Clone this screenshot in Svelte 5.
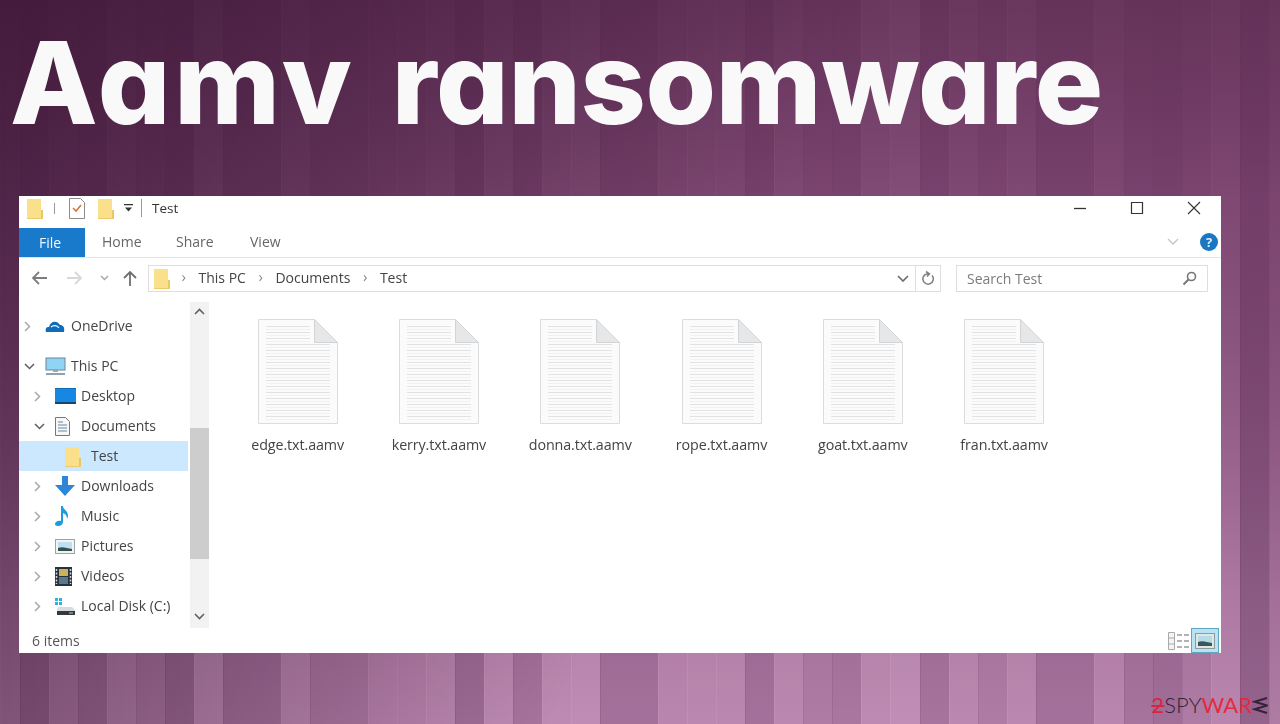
<script>
  // one entry per 29px band of the wallpaper: [width, tone], tone is % white (+) or black (-)
  const bands = [
    [20, 0], [29, -8], [29, 0], [29, -6], [29, 3], [29, -2], [29, -8], [29, 5], [58, -6], [29, 3], [58, -4],
    [29, 0], [29, 0], [29, 2], [29, -8], [29, 3], [29, -6], [29, 3], [29, 4], [58, -7], [29, 1], [29, 2],
    [29, 2], [29, -7], [29, 2], [29, -3], [29, -5], [29, 3], [30, 5], [29, -6], [29, 2], [29, -3], [29, 2],
    [58, -7], [30, 1], [29, -6], [29, -8], [29, -3], [29, 1], [29, -12], [28, -3]
  ];

  function bandImage() {
    let x = 0;
    const stops = [];
    for (const [w, tone] of bands) {
      const c = tone >= 0 ? '255,225,250' : '50,10,50';
      const a = Math.abs(tone) * 0.022;
      const edge = tone >= 0 ? `rgba(255,225,250,${a + 0.08})` : `rgba(50,10,50,${a + 0.08})`;
      stops.push(`${edge} ${x}px`, `${edge} ${x + 1}px`, `rgba(${c},${a}) ${x + 1}px`, `rgba(${c},${a}) ${x + w}px`);
      x += w;
    }
    return `linear-gradient(90deg, ${stops.join(', ')})`;
  }

  // the bands fade out towards the top and left, so the flattening layers sit above them
  const wallpaper = `background-image: linear-gradient(115deg, rgba(50,15,45,.68) 0, rgba(50,15,45,0) 55%), linear-gradient(180deg, rgba(100,50,90,.72) 0, rgba(120,65,110,.55) 28%, rgba(140,85,130,0) 82%), ${bandImage()}, linear-gradient(180deg, #6f3a61 0, #b884ae 100%)`;

  const files = ['edge', 'kerry', 'donna', 'rope', 'goat', 'fran'];
  const lineRows = Array.from({ length: 16 }, (_, i) => 7.5 + i * 6);

  const nav = [
    { label: 'OneDrive', icon: 'cloud', level: 0, chev: 'right', gap: true },
    { label: 'This PC', icon: 'pc', level: 0, chev: 'down' },
    { label: 'Desktop', icon: 'desktop', level: 1, chev: 'right' },
    { label: 'Documents', icon: 'docs', level: 1, chev: 'down' },
    { label: 'Test', icon: 'folder', level: 2, chev: '', selected: true },
    { label: 'Downloads', icon: 'downloads', level: 1, chev: 'right' },
    { label: 'Music', icon: 'music', level: 1, chev: 'right' },
    { label: 'Pictures', icon: 'pictures', level: 1, chev: 'right' },
    { label: 'Videos', icon: 'videos', level: 1, chev: 'right' },
    { label: 'Local Disk (C:)', icon: 'disk', level: 1, chev: 'right' }
  ];
</script>

{#snippet folder(w, h)}
  <svg width={w} height={h} viewBox="0 0 16 21">
    <path d="M0 1h14v20H0z" fill="#fbe08c" />
    <path d="M14 12h2v9h-2z" fill="#e9c765" />
    <path d="M0 20h16v1H0z" fill="#eccb6e" />
  </svg>
{/snippet}

{#snippet navIcon(name)}
  {#if name === 'cloud'}
    <svg width="20" height="14" viewBox="0 0 20 14">
      <path d="M1 13c-1-3 0-5 3-5 1-4 4-6 7-5 2 0 3 2 4 3 3 0 5 2 4 7z" fill="#0e6cbc" />
      <path d="M6 8c2-2 6-2 8 1" fill="none" stroke="#fff" stroke-width="1.2" />
    </svg>
  {:else if name === 'pc'}
    <svg width="21" height="19" viewBox="0 0 21 19">
      <rect x="1" y="1" width="19" height="12" fill="#8fd3f5" stroke="#6c8596" />
      <path d="M8 13h5v2H8z" fill="#9aa8b2" />
      <path d="M1 17h19" stroke="#8da3b2" stroke-width="2" />
    </svg>
  {:else if name === 'desktop'}
    <svg width="21" height="16" viewBox="0 0 21 16">
      <rect width="21" height="16" fill="#1688e4" />
      <path d="M0 14h21v2H0z" fill="#17466d" />
      <path d="M0 0h21v1H0z" fill="#0f6bb5" />
    </svg>
  {:else if name === 'docs'}
    <svg width="15" height="19" viewBox="0 0 15 19">
      <path d="M.5.5h10l4 4v14H.5z" fill="#f7f7f7" stroke="#777" />
      <path d="M3 5h5M3 8h9M3 11h9M3 14h9" stroke="#6b8aa0" stroke-width="1.2" />
    </svg>
  {:else if name === 'folder'}
    {@render folder(16, 21)}
  {:else if name === 'downloads'}
    <svg width="20" height="20" viewBox="0 0 20 20">
      <path d="M7 0h6v9h7L10 20 0 9h7z" fill="#2c86d8" />
    </svg>
  {:else if name === 'music'}
    <svg width="14" height="20" viewBox="0 0 14 20">
      <path d="M6 0h2c0 4 5 4 5 10 0 1-.5 2-1 3 0-4-2-5-4-6v9c0 2-2 4-5 4-2 0-3-1-3-2 0-2 3-4 6-3z" fill="#1b9be0" />
    </svg>
  {:else if name === 'pictures'}
    <svg width="20" height="15" viewBox="0 0 20 15">
      <rect x=".5" y=".5" width="19" height="14" fill="#f2f4f4" stroke="#9aa5aa" />
      <rect x="3" y="3" width="14" height="9" fill="#bfe0ee" />
      <path d="M3 9c4-2 9 0 14 1v2H3z" fill="#33524f" />
    </svg>
  {:else if name === 'videos'}
    <svg width="17" height="19" viewBox="0 0 17 19">
      <rect width="17" height="19" fill="#27323a" />
      <rect x="4" y="2" width="9" height="7" fill="#c9b25a" />
      <rect x="4" y="10" width="9" height="7" fill="#58788c" />
      <path d="M1.5 2v15M15.5 2v15" stroke="#cfd8dd" stroke-width="1.5" stroke-dasharray="2 1.5" />
    </svg>
  {:else if name === 'disk'}
    <svg width="20" height="17" viewBox="0 0 20 17">
      <path d="M0 0h3v3H0zM4 0h3v3H4zM0 4h3v3H0zM4 4h3v3H4z" fill="#2bb3dc" />
      <path d="M3 9h14l3 3v5H2v-5z" fill="#d9dcde" />
      <path d="M2 13h18v4H2z" fill="#33393e" />
      <path d="M14 15h4" stroke="#9fd0e0" />
    </svg>
  {/if}
{/snippet}

<div class="stage" style={wallpaper}>
  <h1><span class="word-a">Aamv</span> <span class="word-b">ransomware</span></h1>

  <section class="window">
    <header class="titlebar">
      <span class="quick">
        {@render folder(16, 21)}
        <i class="sep first"></i>
        <svg class="props" width="16" height="21" viewBox="0 0 16 21">
          <path d="M.5.5h11l4 4v16H.5z" fill="#fff" stroke="#8c8c8c" />
          <path d="M4 10l3 3 5-6" fill="none" stroke="#d9763a" stroke-width="1.6" />
        </svg>
        {@render folder(16, 21)}
        <svg class="qat" width="9" height="8" viewBox="0 0 9 8">
          <path d="M0 0h9v1.2H0zM1 3.500h7L4.500 7.500z" fill="#333" />
        </svg>
        <i class="sep"></i>
      </span>
      <span class="title">Test</span>
      <span class="controls">
        <svg width="14" height="14" viewBox="0 0 14 14"><path d="M1 7.500h12" stroke="#333" stroke-width="1.3" /></svg>
        <svg width="14" height="14" viewBox="0 0 14 14"><path d="M1.500 1.500h11v11h-11z" fill="none" stroke="#333" stroke-width="1.2" /></svg>
        <svg width="14" height="14" viewBox="0 0 14 14"><path d="M1 1l12 12M13 1L1 13" stroke="#333" stroke-width="1.1" /></svg>
      </span>
    </header>

    <nav class="tabs">
      <span class="tab-file">File</span>
      <span class="tab home">Home</span>
      <span class="tab share">Share</span>
      <span class="tab view">View</span>
      <svg class="collapse" width="12" height="7" viewBox="0 0 12 7"><path d="M1 1l5 5 5-5" fill="none" stroke="#c4c4c4" stroke-width="1.3" /></svg>
      <span class="help">?</span>
    </nav>

    <div class="addressbar">
      <span class="arrows">
        <svg width="17" height="14" viewBox="0 0 17 14"><path d="M16 7H2M8 1L2 7l6 6" fill="none" stroke="#7d7d7d" stroke-width="1.8" /></svg>
        <svg class="fwd" width="17" height="14" viewBox="0 0 17 14"><path d="M1 7h14M9 1l6 6-6 6" fill="none" stroke="#d8d8d8" stroke-width="1.8" /></svg>
        <svg class="recent" width="9" height="6" viewBox="0 0 9 6"><path d="M1 1l3.500 3.500L8 1" fill="none" stroke="#a8a8a8" stroke-width="1.5" /></svg>
        <svg class="up" width="14" height="17" viewBox="0 0 14 17"><path d="M7 16V2M1 8l6-6 6 6" fill="none" stroke="#6f6f6f" stroke-width="1.8" /></svg>
      </span>
      <div class="crumbs">
        <span class="crumb-folder">{@render folder(16, 21)}</span>
        <b class="gt">›</b><span class="crumb">This PC</span>
        <b class="gt">›</b><span class="crumb">Documents</span>
        <b class="gt">›</b><span class="crumb">Test</span>
        <svg class="drop" width="12" height="7" viewBox="0 0 12 7"><path d="M1 1l5 5 5-5" fill="none" stroke="#6e6e6e" stroke-width="1.7" /></svg>
        <span class="refresh">
          <svg width="14" height="15" viewBox="0 0 14 15"><path d="M11 4.500a5.200 5.200 0 1 1-3-1.700M5 .5l3.500 2.300L6 5.500" fill="none" stroke="#7e7e7e" stroke-width="1.5" /></svg>
        </span>
      </div>
      <div class="search">
        <span>Search Test</span>
        <svg width="15" height="15" viewBox="0 0 15 15"><circle cx="9.500" cy="5.500" r="4" fill="none" stroke="#777" stroke-width="1.6" /><path d="M6.500 8.500L1.500 13.500" stroke="#777" stroke-width="2" /></svg>
      </div>
    </div>

    <div class="main">
      <aside class="sidebar">
        <ul>
          {#each nav as item}
            <li class="lv{item.level}" class:selected={item.selected} class:gap={item.gap}>
              <span class="chev">
                {#if item.chev === 'right'}
                  <svg width="7" height="11" viewBox="0 0 7 11"><path d="M1 1l4.500 4.500L1 10" fill="none" stroke="#a9a9a9" stroke-width="1.5" /></svg>
                {:else if item.chev === 'down'}
                  <svg width="11" height="7" viewBox="0 0 11 7"><path d="M1 1l4.500 4.500L10 1" fill="none" stroke="#5f5f5f" stroke-width="1.5" /></svg>
                {/if}
              </span>
              <span class="ico">{@render navIcon(item.icon)}</span>
              <span class="label">{item.label}</span>
            </li>
          {/each}
        </ul>
        <div class="scrollbar">
          <svg width="11" height="7" viewBox="0 0 11 7"><path d="M1 6l4.500-4.500L10 6" fill="none" stroke="#606060" stroke-width="1.6" /></svg>
          <div class="track"><div class="thumb"></div></div>
          <svg width="11" height="7" viewBox="0 0 11 7"><path d="M1 1l4.500 4.500L10 1" fill="none" stroke="#606060" stroke-width="1.6" /></svg>
        </div>
      </aside>

      <div class="files">
        {#each files as name}
          <figure>
            <svg width="80" height="105" viewBox="0 0 80 105">
              <path d="M.5.500h56l23 23v81H.500z" fill="#fbfbfb" stroke="#dadcde" />
              {#each lineRows as y}
                <path d="M8 {y}h{y < 23 ? 44 : 64}" stroke="#e2e2e2" />
                <path d="M8 {y + 3}h{y < 23 ? 44 : 64}" stroke="#f1f1f1" />
              {/each}
              <path d="M56.500.500v23h23z" fill="#e6e7e8" stroke="#d2d4d6" />
            </svg>
            <figcaption>{name}.txt.aamv</figcaption>
          </figure>
        {/each}
      </div>
    </div>

    <footer class="status">
      <span>6 items</span>
      <span class="views">
        <svg width="21" height="18" viewBox="0 0 21 18">
          <path d="M.5.500h6v17h-6zM.5 6h6M.5 12h6" fill="#f4f4f4" stroke="#a9a9a9" />
          <path d="M9 3h5M16 3h5M9 9h5M16 9h5M9 15h5M16 15h5" stroke="#9a9a9a" stroke-width="1.5" />
        </svg>
        <span class="large">
          <svg width="20" height="16" viewBox="0 0 20 16">
            <rect x=".5" y=".5" width="19" height="15" fill="#dfe6e6" stroke="#8d9a9e" />
            <rect x="3" y="3" width="14" height="10" fill="#b7dbe6" />
            <path d="M3 9c4-2 9 0 14 1v3H3z" fill="#37595a" />
          </svg>
        </span>
      </span>
    </footer>
  </section>

  <div class="watermark" aria-label="2SPYWARE">
    <span class="two">2</span><span class="spy">SPY</span><span class="war">WAR</span>
    <svg width="16" height="17" viewBox="0 0 17 18">
      <path d="M16 1L3 5l13 4L3 13l13 4" fill="none" stroke="#352338" stroke-width="2.200" />
    </svg>
  </div>
</div>

<style>
  :global(body) {
    margin: 0;
  }

  .stage {
    width: 1280px;
    height: 724px;
    overflow: hidden;
    display: flex;
    flex-direction: column;
    font-family: 'Open Sans', 'Noto Sans', sans-serif;
    color: #3c3c3c;
  }

  h1 {
    margin: 0;
    height: 196px;
    padding-left: 10px;
    box-sizing: border-box;
    font-family: Inter, 'Liberation Sans', sans-serif;
    font-feature-settings: 'cv11' 1;
    font-size: 114px;
    font-weight: 800;
    line-height: 165px;
    white-space: nowrap;
    color: #f9f9f9;
  }

  .word-a {
    letter-spacing: 3.8px;
  }

  .word-b {
    letter-spacing: -0.3px;
    margin-left: 11px;
  }

  .window {
    margin-left: 19px;
    width: 1202px;
    height: 457px;
    background: #fff;
    display: flex;
    flex-direction: column;
    font-size: 14px;
    filter: blur(0.35px);
  }

  .titlebar {
    height: 32px;
    box-sizing: border-box;
    display: flex;
    align-items: center;
    padding: 0 0 8px 8px;
    flex: none;
  }

  .quick {
    display: flex;
    align-items: center;
    color: #333;
  }

  .quick svg {
    display: block;
  }

  .sep {
    width: 1px;
    height: 18px;
    background: #9a9a9a;
    margin-left: 8px;
  }

  .sep.first {
    height: 11px;
    margin: 0 14px 0 11px;
  }

  .quick .props {
    margin-right: 13px;
  }

  .quick .qat {
    margin-left: 10px;
  }

  .title {
    margin-left: 10px;
    font-size: 13.5px;
    color: #333;
  }

  .controls {
    margin-left: auto;
    margin-right: 20px;
    display: flex;
    gap: 43px;
  }

  .tabs {
    height: 29px;
    flex: none;
    display: flex;
    align-items: center;
    position: relative;
    border-bottom: 1px solid #e4e4e4;
    color: #666;
  }

  .tab-file {
    width: 66px;
    height: 29px;
    box-sizing: border-box;
    padding: 0 4px 1px 0;
    background: #1979ca;
    color: #f2f8fc;
    display: grid;
    place-items: center;
  }

  .tab {
    margin: -2px 0 0 17px;
    width: 57px;
  }

  .collapse {
    margin: -2px 21px 0 auto;
  }

  .help {
    width: 18px;
    height: 18px;
    margin: -2px 3px 0 0;
    border-radius: 50%;
    background: #1c77c3;
    color: #dfefff;
    font-size: 13px;
    font-weight: 700;
    display: grid;
    place-items: center;
  }

  .addressbar {
    height: 40px;
    flex: none;
    display: flex;
    align-items: center;
    color: #444;
  }

  .arrows {
    display: flex;
    align-items: center;
    width: 129px;
    padding-left: 12px;
    box-sizing: border-box;
  }

  .arrows .fwd {
    margin-left: 18px;
  }

  .arrows .recent {
    margin-left: 17px;
  }

  .arrows .up {
    margin-left: 14px;
  }

  .crumbs {
    width: 793px;
    height: 27px;
    box-sizing: border-box;
    border: 1px solid #dedede;
    display: flex;
    align-items: center;
    gap: 12.5px;
    padding-left: 5px;
  }

  .crumb-folder {
    display: flex;
    margin-right: -1px;
  }

  .crumb {
    margin-bottom: 2px;
  }

  .gt {
    font-weight: 400;
    color: #8a8a8a;
    font-size: 15px;
    line-height: 1;
    margin-top: -3px;
  }

  .crumbs .drop {
    margin-left: auto;
  }

  .refresh {
    width: 24px;
    height: 25px;
    margin-left: -6px;
    border-left: 1px solid #dedede;
    display: grid;
    place-items: center;
  }

  .search {
    width: 252px;
    height: 27px;
    margin-left: 15px;
    box-sizing: border-box;
    border: 1px solid #dedede;
    display: flex;
    align-items: center;
    justify-content: space-between;
    padding: 0 10px;
    color: #7b7b7b;
  }

  .main {
    flex: 1;
    display: flex;
    min-height: 0;
  }

  .sidebar {
    width: 190px;
    flex: none;
    display: flex;
    position: relative;
  }

  ul {
    list-style: none;
    margin: 0;
    padding: 13px 0 0;
    width: 169px;
    flex: none;
    color: #444;
  }

  li {
    height: 30px;
    display: flex;
    align-items: center;
    padding-left: 5px;
  }

  li.lv1 {
    padding-left: 15px;
  }

  li.lv2 {
    padding-left: 25px;
  }

  li.gap {
    margin-bottom: 10px;
  }

  li.selected {
    background: #cce8ff;
  }

  .label {
    margin-bottom: 2px;
  }

  .chev {
    width: 21px;
    flex: none;
    display: flex;
    align-items: center;
  }

  .ico {
    width: 26px;
    flex: none;
    display: flex;
    align-items: center;
  }

  .scrollbar {
    margin-left: 2px;
    width: 19px;
    height: 326px;
    margin-top: 4px;
    background: #f2f2f2;
    display: flex;
    flex-direction: column;
    align-items: center;
    justify-content: space-between;
    padding: 6px 0 8px;
    box-sizing: border-box;
    flex: none;
  }

  .track {
    flex: 1;
    width: 100%;
    margin: 0;
    padding-top: 113px;
  }

  .thumb {
    height: 131px;
    background: #cdcdcd;
  }

  .files {
    flex: 1;
    display: flex;
    align-items: flex-start;
    padding: 21px 0 0 18px;
  }

  figure {
    margin: 0;
    width: 141.3px;
    display: flex;
    flex-direction: column;
    align-items: center;
    color: #444;
    font-size: 14.3px;
  }

  figure svg {
    display: block;
  }

  figcaption {
    margin-top: 11px;
    letter-spacing: -0.1px;
  }

  .status {
    height: 25px;
    flex: none;
    display: flex;
    align-items: center;
    justify-content: space-between;
    padding-left: 13px;
    color: #555;
  }

  .views {
    display: flex;
    align-items: center;
    gap: 2px;
    margin-right: 2px;
  }

  .large {
    width: 28px;
    height: 25px;
    box-sizing: border-box;
    background: #b9e3f3;
    border: 1px solid #5ba8c0;
    display: grid;
    place-items: center;
  }

  .watermark {
    margin: 41px 12px 0 auto;
    height: 22px;
    display: flex;
    align-items: center;
    font-family: Lato, 'Liberation Sans', sans-serif;
    font-weight: 300;
    font-size: 22px;
    line-height: 1;
  }

  .two {
    color: #d8263c;
    font-weight: 400;
    text-decoration: line-through;
    text-decoration-thickness: 2px;
  }

  .spy {
    color: #352338;
  }

  .war {
    color: #e42a3e;
    font-weight: 400;
  }
</style>
